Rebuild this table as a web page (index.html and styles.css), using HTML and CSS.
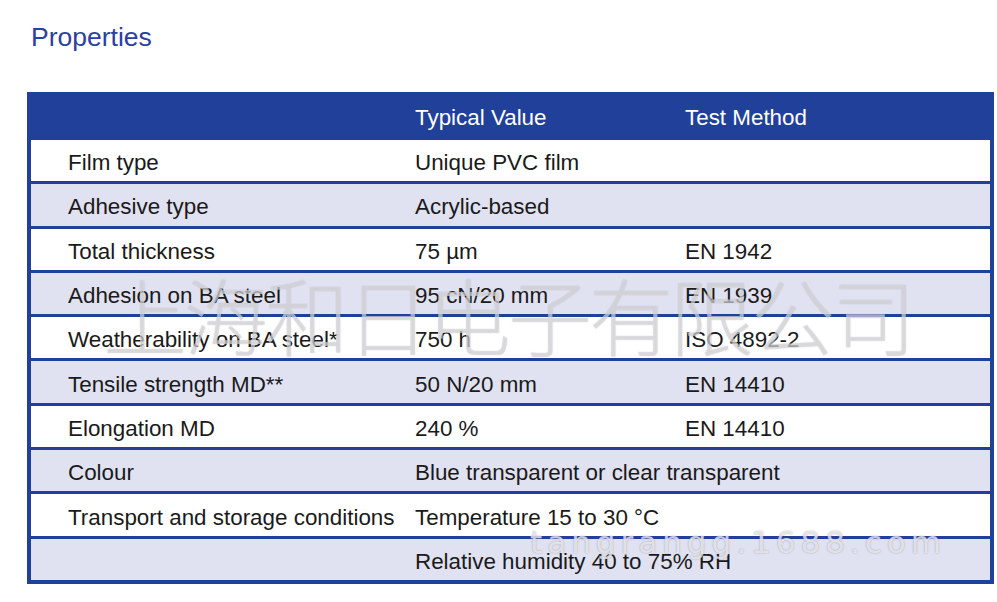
FILE: index.html
```html
<!DOCTYPE html>
<html lang="en">
<head>
<meta charset="utf-8">
<title>Properties</title>
<link rel="stylesheet" href="styles.css">
</head>
<body>
<h1 class="title">Properties</h1>
<div class="sheet">
  <div class="table">
    <div class="row head">
      <div class="cell label"></div>
      <div class="cell">Typical Value</div>
      <div class="cell">Test Method</div>
    </div>
    <div class="row">
      <div class="cell label">Film type</div>
      <div class="cell">Unique PVC film</div>
      <div class="cell"></div>
    </div>
    <div class="row alt">
      <div class="cell label">Adhesive type</div>
      <div class="cell">Acrylic-based</div>
      <div class="cell"></div>
    </div>
    <div class="row">
      <div class="cell label">Total thickness</div>
      <div class="cell">75 µm</div>
      <div class="cell">EN 1942</div>
    </div>
    <div class="row alt">
      <div class="cell label">Adhesion on BA steel</div>
      <div class="cell">95 cN/20 mm</div>
      <div class="cell">EN 1939</div>
    </div>
    <div class="row">
      <div class="cell label">Weatherability on BA steel*</div>
      <div class="cell">750 h</div>
      <div class="cell">ISO 4892-2</div>
    </div>
    <div class="row alt">
      <div class="cell label">Tensile strength MD**</div>
      <div class="cell">50 N/20 mm</div>
      <div class="cell">EN 14410</div>
    </div>
    <div class="row">
      <div class="cell label">Elongation MD</div>
      <div class="cell">240 %</div>
      <div class="cell">EN 14410</div>
    </div>
    <div class="row alt">
      <div class="cell label">Colour</div>
      <div class="cell span">Blue transparent or clear transparent</div>
    </div>
    <div class="row">
      <div class="cell label">Transport and storage conditions</div>
      <div class="cell span">Temperature 15 to 30 °C</div>
    </div>
    <div class="row alt">
      <div class="cell label"></div>
      <div class="cell span">Relative humidity 40 to 75% RH</div>
    </div>
  </div>
  <div class="wm-cn">上海和日电子有限公司</div>
  <div class="wm-url">tangrangg.1688.com</div>
</div>
</body>
</html>
```

FILE: styles.css
```css
html, body {
  margin: 0;
  padding: 0;
  background: #ffffff;
}

body {
  font-family: "Liberation Sans", Arial, sans-serif;
  color: #1a1a1a;
  width: 997px;
  height: 602px;
  overflow: hidden;
}

.title {
  margin: 23px 0 0 31px;
  font-size: 26.5px;
  line-height: 28px;
  font-weight: normal;
  color: #2a40a0;
  height: 28px;
}

.sheet {
  position: relative;
  margin: 41px 0 0 27px;
  width: 967px;
}

.table {
  display: flex;
  flex-direction: column;
  gap: 3px;
  height: 492px;
  box-sizing: border-box;
  background: #21409a;
  border: 4px solid #21409a;
  border-top: 0;
}

.row {
  flex: 1 1 0;
  display: grid;
  grid-template-columns: 384px 270px 1fr;
  align-items: center;
  background: #ffffff;
  font-size: 22.4px;
  line-height: 25px;
  padding-top: 4px;
  box-sizing: border-box;
}

.row.alt {
  background: #e0e1f1;
}

.row.head {
  flex: 0 0 45px;
  background: #21409a;
  color: #ffffff;
  padding-top: 6px;
}

.cell {
  white-space: nowrap;
}

.cell.label {
  padding-left: 37px;
}

.cell.span {
  grid-column: 2 / 4;
}

.wm-cn {
  position: absolute;
  left: 76px;
  top: 177px;
  font-family: "Noto Sans CJK SC", sans-serif;
  font-size: 84px;
  line-height: 90px;
  letter-spacing: -3px;
  font-weight: 300;
  color: rgba(255, 255, 255, 0.5);
  text-shadow: 0 0 1px rgba(100, 100, 110, 0.5);
  white-space: nowrap;
  pointer-events: none;
}

.wm-url {
  position: absolute;
  left: 503px;
  top: 432px;
  font-family: "DejaVu Sans", sans-serif;
  font-size: 31px;
  line-height: 36px;
  letter-spacing: 5px;
  color: rgba(255, 255, 255, 0.7);
  text-shadow: 0 0 1.5px rgba(100, 100, 110, 0.6);
  white-space: nowrap;
  pointer-events: none;
}
```
